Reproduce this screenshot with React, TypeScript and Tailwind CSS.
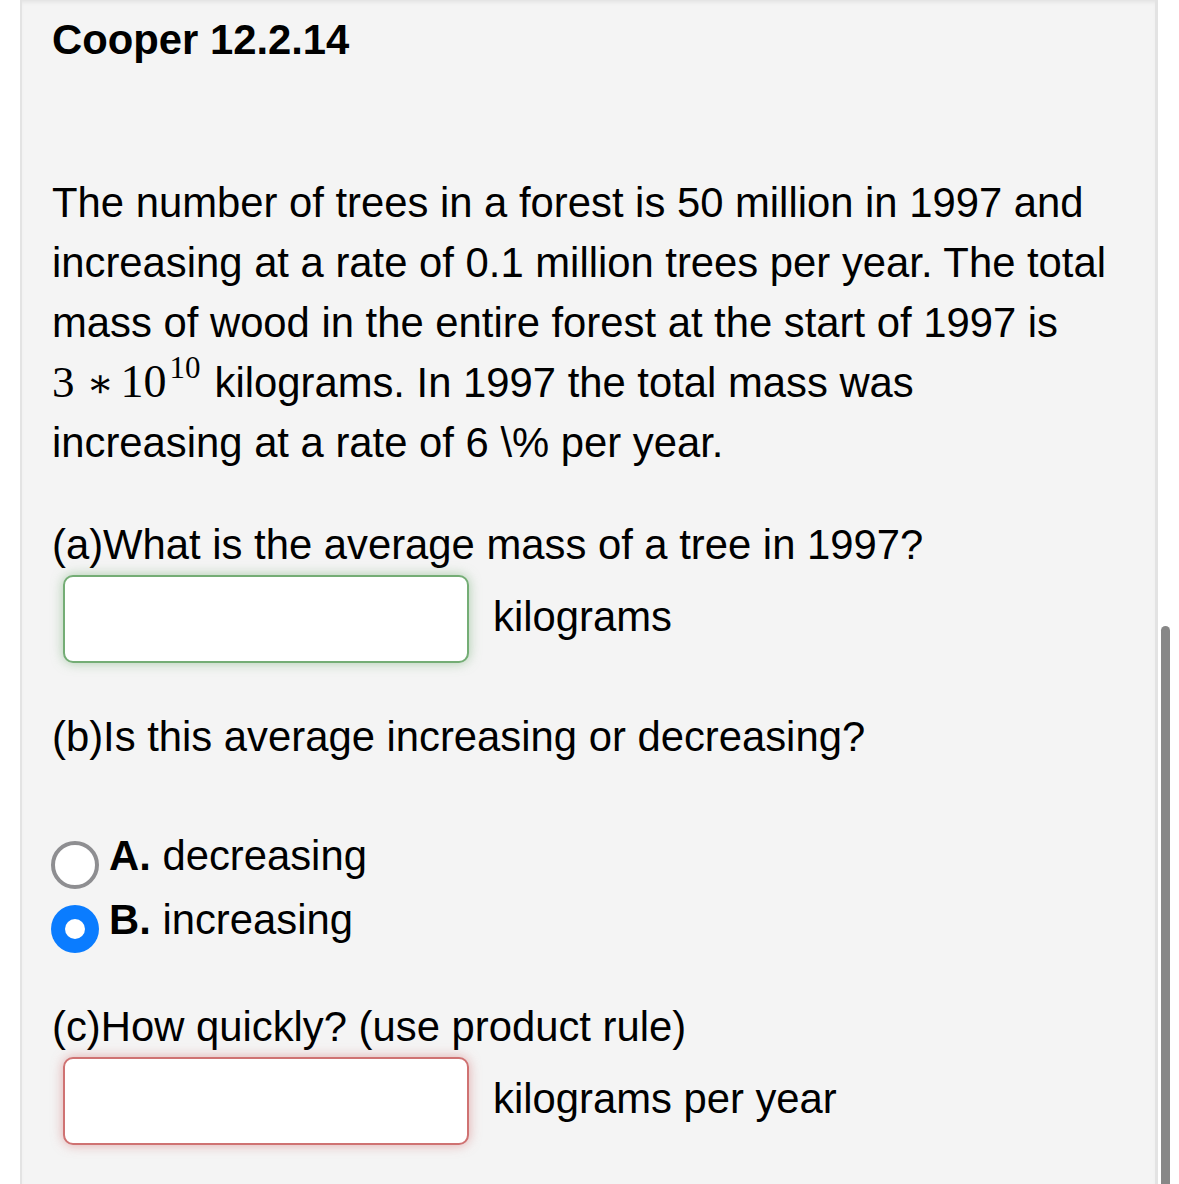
const sans = { fontFamily: '"Liberation Sans", Arial, Helvetica, sans-serif' };

const Radio = ({ checked }: { checked: boolean }) =>
  checked ? (
    <div className="w-12 h-12 shrink-0 rounded-full bg-[#0a7cff] flex items-center justify-center">
      <div className="w-5 h-5 rounded-full bg-white" />
    </div>
  ) : (
    <div className="w-12 h-12 shrink-0 rounded-full bg-white border-4 border-[#8e8e91]" />
  );

export default function App() {
  return (
    <div className="relative h-[1184px] w-full overflow-hidden bg-white text-black" style={sans}>
      <div className="ml-[20px] w-[1138px] min-h-[1184px] bg-[#f4f4f4] border-l-2 border-r-[3px] border-[#e3e3e3] shadow-[inset_0_4px_4px_-2px_rgba(0,0,0,0.08)] pl-[30px] pr-4 pt-4">
        {/* titre */}
        <h1 className="text-[41.8px] leading-[48px] font-bold">Cooper 12.2.14</h1>

        {/* énoncé */}
        <div className="mt-[109px] text-[41.8px] leading-[60px]">
          <div>The number of trees in a forest is 50 million in 1997 and</div>
          <div>increasing at a rate of 0.1 million trees per year. The total</div>
          <div>mass of wood in the entire forest at the start of 1997 is</div>
          <div className="h-[60px]">
            <span className="text-[45px] leading-[30px]" style={{ fontFamily: '"Liberation Serif", serif' }}>3</span>
            <span className="inline-block ml-[12px] w-[24px] text-center text-[40px] leading-[30px]" style={{ fontFamily: '"DejaVu Serif", serif' }}>∗</span>
            <span className="ml-[10px] text-[46px] leading-[30px]" style={{ fontFamily: '"Liberation Serif", serif' }}>
              10
              <span className="relative -top-[19px] ml-[3px] text-[31px]">10</span>
            </span>
            <span className="ml-[14px]">kilograms. In 1997 the total mass was</span>
          </div>
          <div>increasing at a rate of 6 \% per year.</div>
        </div>

        {/* (a) */}
        <div className="mt-[42px] text-[41.8px] leading-[60px]">(a)What is the average mass of a tree in 1997?</div>
        <div className="flex items-center ml-[11px]">
          <div className="w-[406px] h-[88px] bg-white rounded-[10px] border-2 border-[#74ad75] shadow-[0_0_12px_rgba(110,170,110,0.55)]" />
          <span className="ml-[24px] text-[41.8px] leading-[60px] -mt-1">kilograms</span>
        </div>

        {/* (b) */}
        <div className="mt-[44px] text-[41.8px] leading-[60px]">(b)Is this average increasing or decreasing?</div>
        <div className="mt-[74px] flex flex-col gap-4 -ml-[1px]">
          <div className="flex items-center h-12 gap-[10px]">
            <Radio checked={false} />
            <span className="text-[41.8px] leading-[48px] mb-[18px]">
              <b>A.</b> decreasing
            </span>
          </div>
          <div className="flex items-center h-12 gap-[10px]">
            <Radio checked />
            <span className="text-[41.8px] leading-[48px] mb-[18px]">
              <b>B.</b> increasing
            </span>
          </div>
        </div>

        {/* (c) */}
        <div className="mt-[44px] text-[41.8px] leading-[60px]">(c)How quickly? (use product rule)</div>
        <div className="flex items-center ml-[11px]">
          <div className="w-[406px] h-[88px] bg-white rounded-[10px] border-2 border-[#cf7272] shadow-[0_0_12px_rgba(210,110,110,0.55)]" />
          <span className="ml-[24px] text-[41.8px] leading-[60px] -mt-1">kilograms per year</span>
        </div>
      </div>

      {/* barre de défilement */}
      <div className="absolute right-[9px] top-[626px] w-[9px] h-[600px] rounded-full bg-[#878787]" />
    </div>
  );
}
